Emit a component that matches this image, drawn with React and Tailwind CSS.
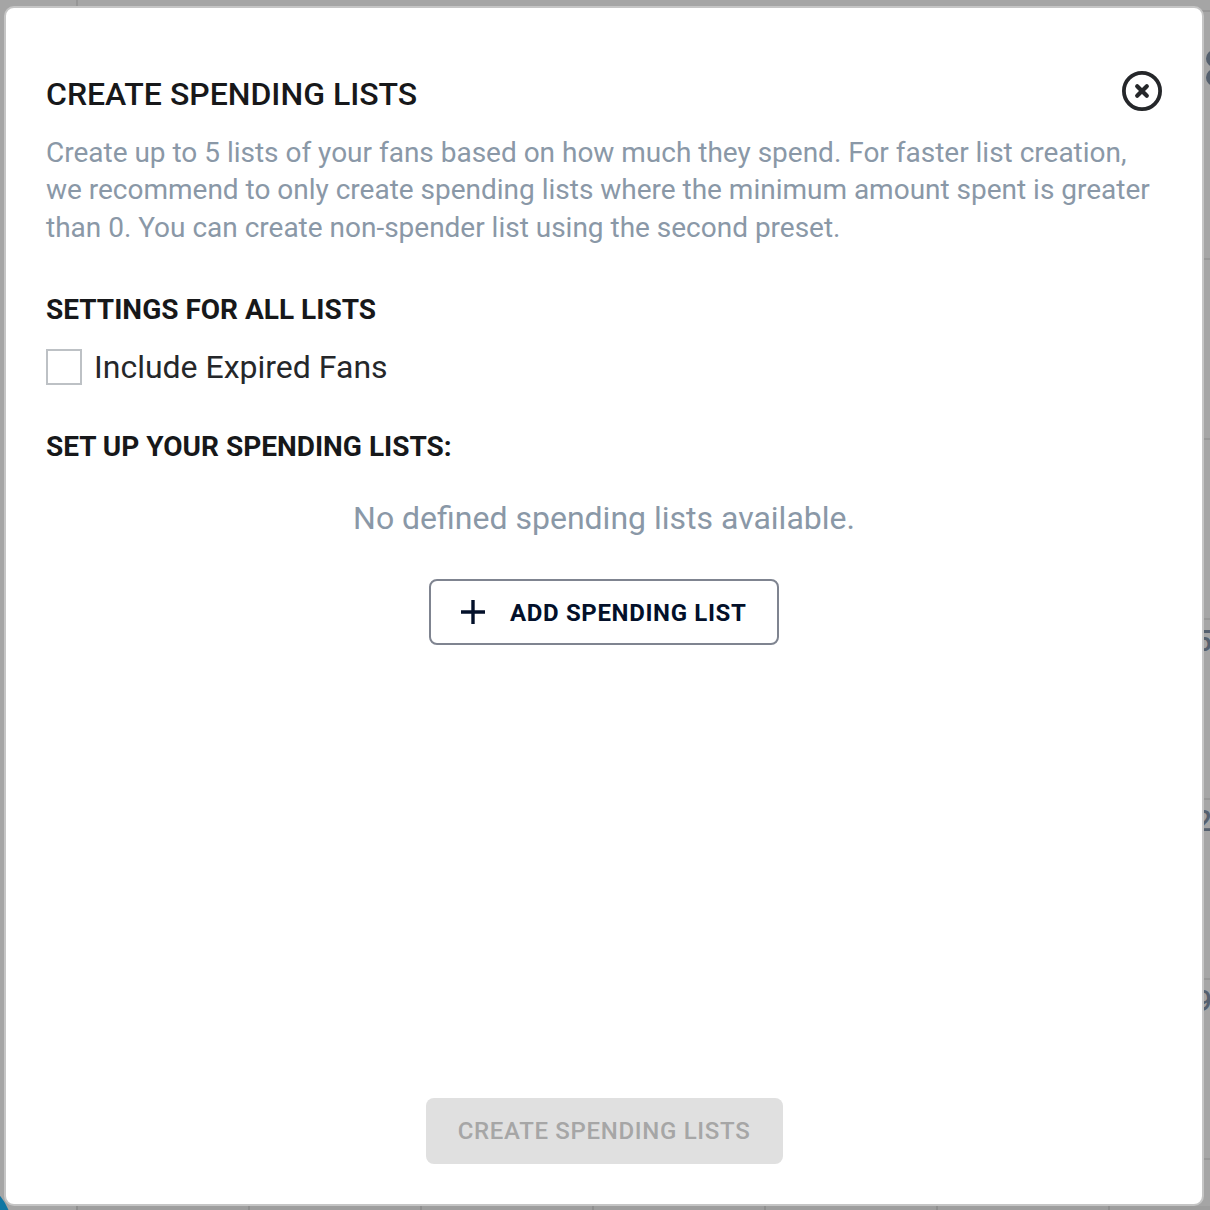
import React, { useState } from "react";

// The calendar page that stays behind the dialog
const rows = [
  { height: "h-[248px]", label: "8" },
  { height: "h-[180px]", label: "" },
  { height: "h-[180px]", label: "" },
  { height: "h-[180px]", label: "5" },
  { height: "h-[180px]", label: "2" },
  { height: "h-[180px]", label: "9" },
  { height: "h-[52px]", label: "" },
];

const Backdrop = () => (
  <div className="absolute inset-0 flex flex-col overflow-hidden bg-[#a5a5a5]" aria-hidden="true">
    <div className="h-[10px] shrink-0 ml-[76px] border-l-2 border-[#969696]" />
    {rows.map((row, idx) => (
      <div
        key={idx}
        className={`${row.height} shrink-0 ml-[76px] border-t-2 border-[#979797] flex justify-end text-[#55606e]`}
      >
        {idx === 0 ? (
          <div className="flex flex-col pt-[38px] -mr-[13px]">
            <div className="size-[17px] rounded-full bg-[#55606e]" />
            <div className="mt-[2px] size-[17px] rounded-full bg-[#55606e]" />
          </div>
        ) : (
          <span className="pt-1 -mr-[2px] text-[29px] font-medium leading-[34px]">{row.label}</span>
        )}
      </div>
    ))}
    {/* bottom ends of the day columns */}
    <div className="absolute bottom-0 left-[76px] flex h-1 bg-[#9e9e9e]">
      {[0, 1, 2, 3, 4, 5, 6].map((col) => (
        <div key={col} className="w-[172px] shrink-0 border-l-2 border-[#8f8f8f]" />
      ))}
    </div>
    {/* chat bubble */}
    <div className="absolute -left-[92px] top-[1177px] size-[104px] rounded-full bg-[#0f76a3]" />
  </div>
);

const CloseIcon = () => (
  <svg className="size-10" viewBox="0 0 40 40" fill="none" stroke="currentColor">
    <circle cx="20" cy="20" r="18.1" strokeWidth="3.8" />
    <path d="M15.2 15.2l9.6 9.6M24.8 15.2l-9.6 9.6" strokeWidth="4.2" strokeLinecap="round" />
  </svg>
);

const PlusIcon = () => (
  <svg className="size-6" viewBox="0 0 24 24" fill="none" stroke="currentColor" strokeWidth="3.4">
    <path d="M12 0v24M0 12h24" />
  </svg>
);

const App = () => {
  const [includeExpired, setIncludeExpired] = useState(false);

  return (
    <div className="relative h-[1210px] w-[1210px] overflow-hidden px-1 pt-[6px] font-['Roboto',sans-serif]">
      <Backdrop />
      <div
        role="dialog"
        className="relative flex h-[1200px] w-[1200px] flex-col rounded-[10px] border-2 border-[#c5c5c5] bg-white px-10 pb-10 pt-[63px]"
      >
        {/* Header */}
        <div className="flex items-start justify-between">
          <h2 className="pt-[4px] text-[32px] font-medium leading-[38px] text-[#17181a]">
            CREATE SPENDING LISTS
          </h2>
          <button type="button" aria-label="Close" className="text-[#25272a]">
            <CloseIcon />
          </button>
        </div>
        <p className="mt-[21px] text-[28px] leading-[37.4px] tracking-[-0.01px] text-[#8a98a7]">
          Create up to 5 lists of your fans based on how much they spend. For faster list creation,
          we recommend to only create spending lists where the minimum amount spent is greater
          than 0. You can create non-spender list using the second preset.
        </p>

        {/* Settings */}
        <h3 className="mt-[45px] text-[28px] font-bold leading-[37px] text-[#17181a]">
          SETTINGS FOR ALL LISTS
        </h3>
        <label className="mt-[21px] flex items-center gap-3">
          <input
            type="checkbox"
            checked={includeExpired}
            onChange={(e) => setIncludeExpired(e.target.checked)}
            className="size-9 appearance-none border-2 border-[#bdc1c5] bg-white checked:bg-[#25272a]"
          />
          <span className="text-[32px] leading-9 text-[#25272a]">Include Expired Fans</span>
        </label>

        {/* Lists */}
        <h3 className="mt-[43px] text-[28px] font-bold leading-[37px] text-[#17181a]">
          SET UP YOUR SPENDING LISTS:
        </h3>
        <p className="mt-[34px] text-center text-[32px] leading-[38px] text-[#8a98a7]">
          No defined spending lists available.
        </p>
        <button
          type="button"
          className="mt-[42px] flex h-[66px] w-[350px] items-center gap-[25px] self-center rounded-lg border-2 border-[#7f8490] pl-[30px] text-2xl font-bold tracking-[0.65px] text-[#03102a]"
        >
          <PlusIcon />
          <span className="pt-[2px]">ADD SPENDING LIST</span>
        </button>

        <button
          type="button"
          disabled
          className="mt-auto h-[66px] w-[357px] self-center rounded-lg bg-[#e0e0e0] text-2xl font-medium tracking-[0.68px] text-[#a6a6a6]"
        >
          CREATE SPENDING LISTS
        </button>
      </div>
    </div>
  );
};

export default App;
